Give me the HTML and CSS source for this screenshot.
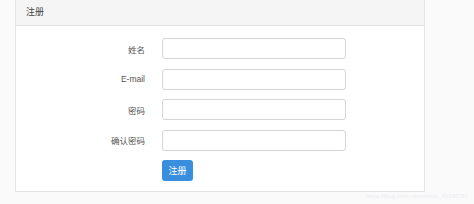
FILE: index.html
```html
<!DOCTYPE html>
<html lang="zh-CN">
<head>
    <meta charset="UTF-8">
    <title>注册</title>
    <link rel="stylesheet" href="styles.css">
</head>
<body>

    <!-- Register panel -->
    <div class="panel">
        <div class="panel-heading">注册</div>
        <form class="panel-body">
            <div class="form-row">
                <label class="form-label">姓名</label>
                <input class="form-input" type="text">
            </div>
            <div class="form-row">
                <label class="form-label">E-mail</label>
                <input class="form-input" type="text">
            </div>
            <div class="form-row">
                <label class="form-label">密码</label>
                <input class="form-input" type="password">
            </div>
            <div class="form-row">
                <label class="form-label">确认密码</label>
                <input class="form-input" type="password">
            </div>
            <div class="form-row">
                <span class="form-label"></span>
                <button class="btn" type="button">注册</button>
            </div>
        </form>
    </div>

    <div class="watermark">https://blog.csdn.net/weixin_45142761</div>

</body>
</html>
```

FILE: styles.css
```css
* {
    margin: 0;
    padding: 0;
    box-sizing: border-box;
}

body {
    font-family: "Liberation Sans", "Noto Sans CJK SC", sans-serif;
    background-color: #fafafb;
    width: 474px;
    height: 204px;
    position: relative;
    overflow: hidden;
}

.panel {
    margin-left: 15px;
    width: 410px;
    background-color: #fff;
    border: 1px solid #e3e3e3;
    border-top: none;
}

.panel-heading {
    height: 26px;
    line-height: 25px;
    padding-left: 10px;
    font-size: 9px;
    color: #444;
    background-color: #f5f5f5;
    border-bottom: 1px solid #e3e3e3;
}

.panel-body {
    display: flex;
    flex-direction: column;
    gap: 9.5px;
    padding: 12px 0 10px;
}

.form-row {
    display: flex;
    align-items: center;
    gap: 17px;
}

.form-label {
    width: 129px;
    text-align: right;
    font-size: 8.5px;
    color: #555;
}

.form-input {
    width: 184px;
    height: 21px;
    border: 1px solid #d4d4d4;
    border-radius: 3px;
    background-color: #fff;
}

.btn {
    width: 31px;
    height: 21px;
    border: none;
    border-radius: 3px;
    background-color: #3a8ede;
    color: #fff;
    font-family: "Noto Sans CJK SC", sans-serif;
    font-size: 9px;
}

.watermark {
    position: absolute;
    left: 366px;
    top: 193px;
    font-size: 6px;
    color: #ececf0;
}
```
